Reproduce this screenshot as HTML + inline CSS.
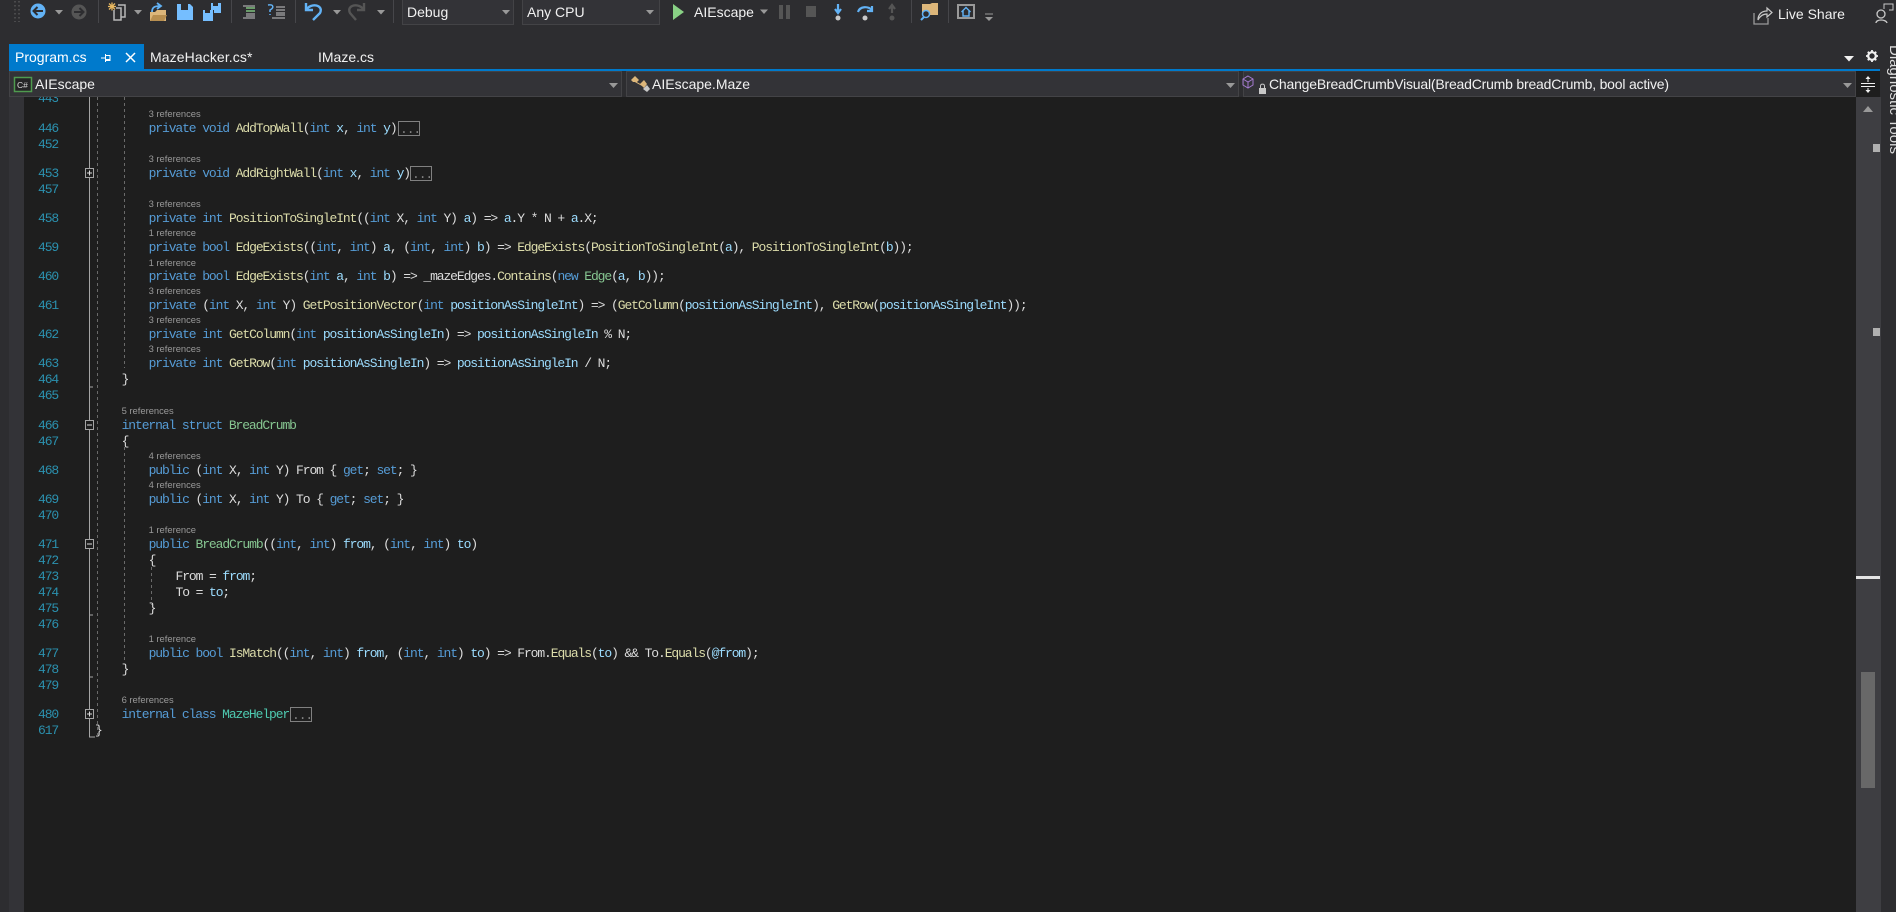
<!DOCTYPE html>
<html><head><meta charset="utf-8"><style>
html,body{margin:0;padding:0;width:1896px;height:912px;overflow:hidden;background:#2d2d30}
body{position:relative;font-family:"Liberation Sans",sans-serif;color:#f1f1f1}
div{position:absolute;white-space:pre}
.ui{font-size:14px;line-height:18px;color:#f1f1f1}
.combo{background:#333337;border:1px solid #434346;box-sizing:border-box}
.l{font:13px/16px "Liberation Mono",monospace;letter-spacing:-1.1px;color:#dcdcdc;margin-top:1px}
.n{left:38px;color:#2b91af}
.r{font-size:9.4px;line-height:12px;color:#999}
.k{color:#569cd6}.t{color:#86c691}.h{color:#4ec9b0}.m{color:#dcdcaa}.p{color:#9cdcfe}
.e{border:1px solid #808080;box-sizing:border-box;width:22px;height:15px;color:#808080;font:13px/15px "Liberation Mono",monospace;letter-spacing:-1.1px;padding-left:1px}
</style></head><body>
<div style="left:9px;top:44px;width:135px;height:25px;background:#007acc"></div>
<div style="left:9px;top:69px;width:1871px;height:2px;background:#007acc"></div>
<div class="ui" style="left:15px;top:48px;color:#fff">Program.cs</div>
<div class="ui" style="left:150px;top:48px;letter-spacing:.1px">MazeHacker.cs*</div>
<div class="ui" style="left:318px;top:48px">IMaze.cs</div>

<div class="combo" style="left:402px;top:-2px;width:112px;height:27px"></div>
<div class="combo" style="left:522px;top:-2px;width:138px;height:27px"></div>
<div class="ui" style="left:407px;top:3px">Debug</div>
<div class="ui" style="left:527px;top:3px">Any CPU</div>
<div class="ui" style="left:694px;top:3px">AIEscape</div>
<div class="ui" style="left:1778px;top:5px">Live Share</div>

<div class="combo" style="left:9px;top:71px;width:613px;height:26px"></div>
<div class="combo" style="left:626px;top:71px;width:613px;height:26px"></div>
<div class="combo" style="left:1243px;top:71px;width:613px;height:26px"></div>
<div class="ui" style="left:35px;top:75px">AIEscape</div>
<div class="ui" style="left:652px;top:75px">AIEscape.Maze</div>
<div class="ui" style="left:1269px;top:75px;letter-spacing:-.2px">ChangeBreadCrumbVisual(BreadCrumb breadCrumb, bool active)</div>

<div style="left:9px;top:97px;width:15px;height:815px;background:#333337"></div>
<div style="left:24px;top:97px;width:1832px;height:815px;background:#1e1e1e"></div>
<div style="left:1856px;top:97px;width:25px;height:815px;background:#3e3e42"></div>
<div style="left:1856px;top:71px;width:24px;height:26px;background:#1e1e1e"></div>
<div style="left:1873px;top:144px;width:7px;height:8px;background:#b0b0b0"></div>
<div style="left:1873px;top:328px;width:7px;height:8px;background:#b0b0b0"></div>
<div style="left:1856px;top:576px;width:24px;height:3px;background:#e4e4e4"></div>
<div style="left:1861px;top:672px;width:14px;height:116px;background:#686868"></div>

<div style="left:1887px;top:45px;font-size:15px;line-height:14px;color:#dcdcdc;transform-origin:0 0;transform:translate(14px,0) rotate(90deg)">Diagnostic Tools</div>

<div class="l n" style="top:90px;clip-path:inset(6px 0 0 0)">443</div>
<div class="l n" style="top:120px">446</div>
<div class="l n" style="top:136px">452</div>
<div class="l n" style="top:165px">453</div>
<div class="l n" style="top:181px">457</div>
<div class="l n" style="top:210px">458</div>
<div class="l n" style="top:239px">459</div>
<div class="l n" style="top:268px">460</div>
<div class="l n" style="top:297px">461</div>
<div class="l n" style="top:326px">462</div>
<div class="l n" style="top:355px">463</div>
<div class="l n" style="top:371px">464</div>
<div class="l n" style="top:387px">465</div>
<div class="l n" style="top:417px">466</div>
<div class="l n" style="top:433px">467</div>
<div class="l n" style="top:462px">468</div>
<div class="l n" style="top:491px">469</div>
<div class="l n" style="top:507px">470</div>
<div class="l n" style="top:536px">471</div>
<div class="l n" style="top:552px">472</div>
<div class="l n" style="top:568px">473</div>
<div class="l n" style="top:584px">474</div>
<div class="l n" style="top:600px">475</div>
<div class="l n" style="top:616px">476</div>
<div class="l n" style="top:645px">477</div>
<div class="l n" style="top:661px">478</div>
<div class="l n" style="top:677px">479</div>
<div class="l n" style="top:706px">480</div>
<div class="l n" style="top:722px">617</div>

<div class="r" style="left:148.6px;top:108px">3 references</div>
<div class="l" style="left:148.6px;top:120px"><span class="k">private void</span> <span class="m">AddTopWall</span>(<span class="k">int</span> <span class="p">x</span>, <span class="k">int</span> <span class="p">y</span>)</div>
<div class="e" style="left:398px;top:121px">...</div>
<div class="r" style="left:148.6px;top:153px">3 references</div>
<div class="l" style="left:148.6px;top:165px"><span class="k">private void</span> <span class="m">AddRightWall</span>(<span class="k">int</span> <span class="p">x</span>, <span class="k">int</span> <span class="p">y</span>)</div>
<div class="e" style="left:410px;top:166px">...</div>
<div class="r" style="left:148.6px;top:198px">3 references</div>
<div class="l" style="left:148.6px;top:210px"><span class="k">private int</span> <span class="m">PositionToSingleInt</span>((<span class="k">int</span> X, <span class="k">int</span> Y) <span class="p">a</span>) =&gt; <span class="p">a</span>.Y * N + <span class="p">a</span>.X;</div>
<div class="r" style="left:148.6px;top:227px">1 reference</div>
<div class="l" style="left:148.6px;top:239px"><span class="k">private bool</span> <span class="m">EdgeExists</span>((<span class="k">int</span>, <span class="k">int</span>) <span class="p">a</span>, (<span class="k">int</span>, <span class="k">int</span>) <span class="p">b</span>) =&gt; <span class="m">EdgeExists</span>(<span class="m">PositionToSingleInt</span>(<span class="p">a</span>), <span class="m">PositionToSingleInt</span>(<span class="p">b</span>));</div>
<div class="r" style="left:148.6px;top:257px">1 reference</div>
<div class="l" style="left:148.6px;top:268px"><span class="k">private bool</span> <span class="m">EdgeExists</span>(<span class="k">int</span> <span class="p">a</span>, <span class="k">int</span> <span class="p">b</span>) =&gt; _mazeEdges.<span class="m">Contains</span>(<span class="k">new</span> <span class="t">Edge</span>(<span class="p">a</span>, <span class="p">b</span>));</div>
<div class="r" style="left:148.6px;top:285px">3 references</div>
<div class="l" style="left:148.6px;top:297px"><span class="k">private</span> (<span class="k">int</span> X, <span class="k">int</span> Y) <span class="m">GetPositionVector</span>(<span class="k">int</span> <span class="p">positionAsSingleInt</span>) =&gt; (<span class="m">GetColumn</span>(<span class="p">positionAsSingleInt</span>), <span class="m">GetRow</span>(<span class="p">positionAsSingleInt</span>));</div>
<div class="r" style="left:148.6px;top:314px">3 references</div>
<div class="l" style="left:148.6px;top:326px"><span class="k">private int</span> <span class="m">GetColumn</span>(<span class="k">int</span> <span class="p">positionAsSingleIn</span>) =&gt; <span class="p">positionAsSingleIn</span> % N;</div>
<div class="r" style="left:148.6px;top:343px">3 references</div>
<div class="l" style="left:148.6px;top:355px"><span class="k">private int</span> <span class="m">GetRow</span>(<span class="k">int</span> <span class="p">positionAsSingleIn</span>) =&gt; <span class="p">positionAsSingleIn</span> / N;</div>
<div class="l" style="left:121.6px;top:371px">}</div>
<div class="r" style="left:121.6px;top:405px">5 references</div>
<div class="l" style="left:121.6px;top:417px"><span class="k">internal struct</span> <span class="t">BreadCrumb</span></div>
<div class="l" style="left:121.6px;top:433px">{</div>
<div class="r" style="left:148.6px;top:450px">4 references</div>
<div class="l" style="left:148.6px;top:462px"><span class="k">public</span> (<span class="k">int</span> X, <span class="k">int</span> Y) From { <span class="k">get</span>; <span class="k">set</span>; }</div>
<div class="r" style="left:148.6px;top:479px">4 references</div>
<div class="l" style="left:148.6px;top:491px"><span class="k">public</span> (<span class="k">int</span> X, <span class="k">int</span> Y) To { <span class="k">get</span>; <span class="k">set</span>; }</div>
<div class="r" style="left:148.6px;top:524px">1 reference</div>
<div class="l" style="left:148.6px;top:536px"><span class="k">public</span> <span class="t">BreadCrumb</span>((<span class="k">int</span>, <span class="k">int</span>) <span class="p">from</span>, (<span class="k">int</span>, <span class="k">int</span>) <span class="p">to</span>)</div>
<div class="l" style="left:148.6px;top:552px">{</div>
<div class="l" style="left:175.5px;top:568px">From = <span class="p">from</span>;</div>
<div class="l" style="left:175.5px;top:584px">To = <span class="p">to</span>;</div>
<div class="l" style="left:148.6px;top:600px">}</div>
<div class="r" style="left:148.6px;top:633px">1 reference</div>
<div class="l" style="left:148.6px;top:645px"><span class="k">public bool</span> <span class="m">IsMatch</span>((<span class="k">int</span>, <span class="k">int</span>) <span class="p">from</span>, (<span class="k">int</span>, <span class="k">int</span>) <span class="p">to</span>) =&gt; From.<span class="m">Equals</span>(<span class="p">to</span>) &amp;&amp; To.<span class="m">Equals</span>(<span class="p">@from</span>);</div>
<div class="l" style="left:121.6px;top:661px">}</div>
<div class="r" style="left:121.6px;top:694px">6 references</div>
<div class="l" style="left:121.6px;top:706px"><span class="k">internal class</span> <span class="h">MazeHelper</span></div>
<div class="e" style="left:290px;top:707px">...</div>
<div class="l" style="left:95px;top:722px">}</div>

<svg width="1896" height="912" viewBox="0 0 1896 912" style="position:absolute;left:0;top:0">
<!-- outline margin -->
<g fill="none" stroke="#a5a5a5">
<path d="M89.5 97V737H95M89.5 387H93M89.5 615H93M89.5 677H93"/>
<g stroke-dasharray="3 3" stroke="#6a6a6a">
<path d="M97.5 97V735"/>
<path d="M124.5 97V368M124.5 447V660"/>
<path d="M151.5 567V605"/>
</g>
</g>
<g fill="#1e1e1e" stroke="#a5a5a5">
<rect x="85.5" y="168.5" width="8" height="9"/><rect x="85.5" y="420.5" width="8" height="9"/><rect x="85.5" y="539.5" width="8" height="9"/><rect x="85.5" y="709.5" width="8" height="9"/>
</g>
<path d="M87 173H92M89.5 170.5V175.5M87 425H92M87 544H92M87 714H92M89.5 711.5V716.5" stroke="#dcdcdc" fill="none"/>

<!-- toolbar separators -->
<path d="M98.5 0V23M231.5 0V23M295.5 0V23M393.5 0V23M911.5 0V23M948.5 0V23" stroke="#46464a"/>
<!-- grip -->
<path d="M15 1V22M19 1V22" stroke="#555" stroke-width="1.5" stroke-dasharray="1.5 2.5"/>
<!-- back/forward -->
<circle cx="38" cy="11" r="7.5" fill="#62b2f5"/>
<path d="M43 11H34M37.5 7L33.5 11L37.5 15" stroke="#2d2d30" stroke-width="2" fill="none"/>
<circle cx="79" cy="12" r="7.5" fill="#555"/>
<path d="M74 12H83M79.5 8L83.5 12L79.5 16" stroke="#2d2d30" stroke-width="2" fill="none"/>
<!-- dropdown arrows -->
<g fill="#999">
<path d="M55 10H63L59 14.5Z M134 10H142L138 14.5Z M333 10H341L337 14.5Z M377 10H385L381 14.5Z M502 10H510L506 14.5Z M646 10H654L650 14.5Z M760 9.5H768L764 14Z"/>
<path d="M609 83H618L613.500 88Z M1226 83H1235L1230.500 88Z M1843 83H1852L1847.500 88Z"/>
</g>
<!-- new item -->
<path d="M116 8H121V17H125V5H118M114 10V20H121V15" stroke="#b8b8b8" stroke-width="1.5" fill="none"/>
<path d="M112 2.500V10.500M108 6.500H116M109 3.500L115 9.500M115 3.500L109 9.500" stroke="#e8b860" stroke-width="1.300"/>
<!-- open -->
<path d="M150 12H155L157 10H166V21H150Z" fill="#dcb67a"/>
<path d="M150 21L153 15H167L164 21Z" fill="#b88f50"/>
<path d="M152 12C152 7 155 6 160 6M157 3L161 6L157 9" stroke="#62b2f5" stroke-width="1.800" fill="none"/>
<!-- save -->
<path d="M177 4H190L193 7V20H177Z" fill="#75beff"/><rect x="181" y="4" width="7" height="6" fill="#2d2d30"/>
<!-- save all -->
<path d="M203 10H213V21H203Z" fill="#75beff"/><rect x="205" y="10" width="5" height="3" fill="#2d2d30"/>
<path d="M211 3H221V13H214V10H211Z" fill="#75beff"/><rect x="213" y="3" width="5" height="3" fill="#2d2d30"/>
<!-- comment icons -->
<path d="M243 6H255" stroke="#c8c8c8"/><path d="M246 8H255M246 11H255" stroke="#7ec27e" stroke-width="1.500"/><path d="M246 14H255M246 16H255M243 18H255" stroke="#c8c8c8"/>
<path d="M268 5C274 4 274 8 270 10V12M270 14V15" stroke="#62b2f5" stroke-width="1.500" fill="none"/>
<path d="M276 7H285M276 10H285M276 13H285M276 15H285M272 18H285" stroke="#c8c8c8"/>
<!-- undo -->
<path d="M306 3V10H313M306 10C311 2 324 5 320 13L313 20" stroke="#62b2f5" stroke-width="2.400" fill="none"/>
<!-- redo -->
<path d="M364 3V10H357M364 10C359 2 346 5 350 13L356 20" stroke="#555" stroke-width="2.400" fill="none"/>
<!-- debug -->
<path d="M673 4L684 12L673 20Z" fill="#89d185"/>
<path d="M779 5H783V19H779ZM786 5H790V19H786Z" fill="#555"/>
<rect x="806" y="6" width="10" height="11" fill="#555"/>
<path d="M838 4V12M835 9L838 13L841 9" stroke="#62b2f5" stroke-width="2.200" fill="none"/><circle cx="838" cy="18" r="2.500" fill="#c8c8c8"/>
<path d="M858 12C860 6 868 6 872 10M872 6V11H867" stroke="#62b2f5" stroke-width="2.200" fill="none"/><circle cx="865" cy="18" r="2.500" fill="#c8c8c8"/>
<path d="M892 13V6M889 9L892 5L895 9" stroke="#555" stroke-width="2.200" fill="none"/><circle cx="892" cy="18" r="2.500" fill="#555"/>
<!-- find folder -->
<path d="M922 4H930L932 3H938V15H922Z" fill="#dcb67a"/>
<circle cx="926" cy="14" r="3.500" fill="#2d2d30" stroke="#62b2f5" stroke-width="1.500"/>
<path d="M924 17L921 20" stroke="#62b2f5" stroke-width="2"/>
<!-- home -->
<rect x="958" y="5" width="16" height="13" fill="#2d2d30" stroke="#999" stroke-width="2"/>
<path d="M961.500 12L966 7.500L970.500 12M963 11V16H969V11" fill="none" stroke="#62b2f5" stroke-width="1.400"/>
<!-- overflow -->
<path d="M985 14H993" stroke="#999"/><path d="M985 17H993L989 21Z" fill="#999"/>
<!-- live share -->
<path d="M1754 13V24H1768V18" stroke="#999" stroke-width="1.300" fill="none"/>
<path d="M1758 20C1758 14 1762 11 1767 11V8L1772 12.500L1767 17V14C1763 14 1760 16 1758 20Z" fill="none" stroke="#c8c8c8" stroke-width="1.200"/>
<!-- person -->
<circle cx="1881" cy="14" r="4" fill="none" stroke="#c8c8c8" stroke-width="1.300"/>
<path d="M1876 23C1876 19 1886 19 1887 23" stroke="#c8c8c8" stroke-width="1.300" fill="none"/>
<path d="M1884 9V4H1893V10H1889" stroke="#c8c8c8" fill="none"/>
<!-- tab pin and close -->
<path d="M101 58H105M105.500 54V62M105.500 55.500H110V60.500H105.500M105.500 59.500H110" stroke="#fff" fill="none"/>
<path d="M126 53L135 62M135 53L126 62" stroke="#fff" stroke-width="1.500"/>
<!-- tab menu + gear -->
<path d="M1844 56H1854L1849 61.500Z" fill="#f1f1f1"/>
<circle cx="1872" cy="56" r="3.800" fill="none" stroke="#f1f1f1" stroke-width="2.200"/>
<path d="M1872 50V52M1872 60V62M1866 56H1868M1876 56H1878M1867.800 51.800L1869.200 53.200M1874.800 58.800L1876.200 60.200M1867.800 60.200L1869.200 58.800M1874.800 53.200L1876.200 51.800" stroke="#f1f1f1" stroke-width="1.800"/>
<!-- nav icons -->
<rect x="14.500" y="77.500" width="17" height="14" fill="#252526" stroke="#4f9a4f" stroke-width="1.500"/>
<text x="17" y="88" font-family="Liberation Sans,sans-serif" font-size="8.500" fill="#dcdcdc">C#</text>
<path d="M631 80L635 76L639 80L637 82H633Z" fill="#dcb67a"/><path d="M640 84L644 80L647 84L644 88Z" fill="#dcb67a"/><path d="M643 89L647 85L650 89L647 92Z" fill="#c8c8c8"/><path d="M634 81L643 86" stroke="#dcb67a"/>
<path d="M1248 76L1253 79V85L1248 88L1243 85V79ZM1243 79L1248 82L1253 79M1248 82V88" stroke="#a47ad0" fill="none"/>
<rect x="1259" y="88" width="7" height="6" fill="#c8c8c8"/><path d="M1260.500 88V86C1260.500 83.500 1264.500 83.500 1264.500 86V88" stroke="#c8c8c8" fill="none"/>
<!-- split button -->
<path d="M1861 83.500H1875M1861 86.500H1875" stroke="#f1f1f1"/>
<path d="M1868 78V82M1868 88V92" stroke="#f1f1f1"/>
<path d="M1865.500 79H1870.500L1868 76ZM1865.500 90H1870.500L1868 93Z" fill="#f1f1f1"/>
<!-- scrollbar arrow -->
<path d="M1863 112H1873L1868 106Z" fill="#999"/>
</svg>
</body></html>
